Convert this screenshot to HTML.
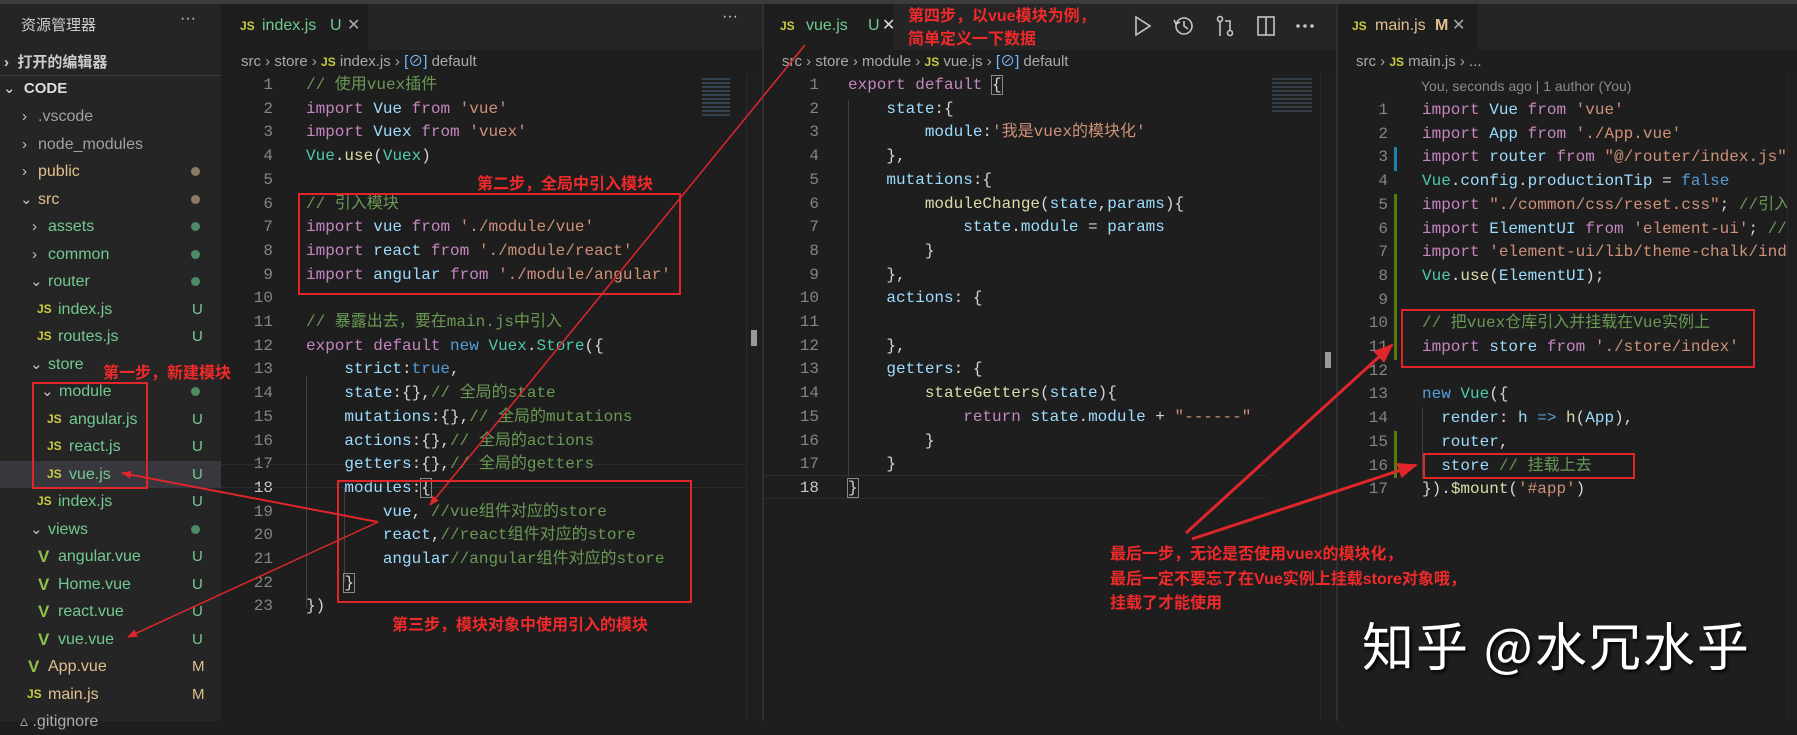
<!DOCTYPE html>
<html><head><meta charset="utf-8">
<style>
*{margin:0;padding:0;box-sizing:border-box}
body{width:1797px;height:721px;overflow:hidden;background:#1e1e1e;position:relative;font-family:"Liberation Sans","Noto Sans CJK SC",sans-serif;color:#ccc}
.abs{position:absolute}
.top{position:absolute;left:0;top:0;width:1797px;height:4px;background:#3c3c3c}
#side{position:absolute;left:0;top:4px;width:221px;height:717px;background:#252526}
.row{position:absolute;left:0;width:221px;height:27px;font-size:16px;line-height:27px;white-space:nowrap}
.chev{position:absolute;color:#c5c5c5;font-size:15px}
.js{color:#cbcb41;font-weight:bold;font-size:12px;position:absolute;font-family:"Liberation Sans",sans-serif}
.vu{color:#8dc149;font-weight:bold;font-size:17px;position:absolute}
.g{color:#73c991}.y{color:#e2c08d}.w{color:#ccc}
.dot{position:absolute;left:191px;top:9px;width:9px;height:9px;border-radius:50%}
.bd{position:absolute;left:192px;font-size:15px}
.tabbar{position:absolute;top:4px;height:46px;background:#252526}
.tab{position:absolute;top:4px;height:46px;background:#1e1e1e;font-size:16px;line-height:44px;white-space:nowrap}
.bc{position:absolute;top:50px;height:24px;font-size:15px;color:#a9a9a9;line-height:24px;white-space:nowrap}
.code{position:absolute;font-family:"Liberation Mono","Noto Sans CJK SC",monospace;font-size:16px;line-height:23.7px;white-space:pre;color:#d4d4d4}
.ln{position:absolute;font-family:"Liberation Mono",monospace;font-size:16px;line-height:23.7px;white-space:pre;color:#858585;text-align:right;width:60px}
.k{color:#c586c0}.v{color:#9cdcfe}.c{color:#4ec9b0}.s{color:#ce9178}.m{color:#6a9955}.f{color:#dcdcaa}.b{color:#569cd6}
.red{position:absolute;border:2px solid #e0262b}
.ann{position:absolute;color:#f02a2a;font-weight:bold;font-size:16px;white-space:nowrap;font-family:"Liberation Sans","Noto Sans CJK SC",sans-serif}
</style></head><body>
<div class="top"></div>
<div id="side">
 <div class="abs" style="left:21px;top:10px;font-size:15px;color:#ccc">资源管理器</div>
 <div class="abs" style="left:180px;top:6px;font-size:16px;color:#ccc">···</div>
 <div class="abs" style="left:4px;top:47px;font-size:15px;color:#ccc;font-weight:bold">›&nbsp; 打开的编辑器</div>
 <div class="abs" style="left:0;top:71px;width:221px;height:1px;background:#3a3a3a"></div>
 <div class="abs" style="left:3px;top:75px;font-size:15px;color:#ddd;font-weight:bold"><span style="font-weight:normal">⌄</span>&nbsp; CODE</div>
</div>
<div id="tree" style="position:absolute;left:0;top:0">
 <div class="row" style="top:103px"><span class="chev" style="left:22px">›</span><span class="abs" style="left:38px;color:#a0a0a0">.vscode</span></div>
 <div class="row" style="top:131px"><span class="chev" style="left:22px">›</span><span class="abs" style="left:38px;color:#a0a0a0">node_modules</span></div>
 <div class="row" style="top:158px"><span class="chev" style="left:22px">›</span><span class="abs y" style="left:38px">public</span><span class="dot" style="background:#8a7c64"></span></div>
 <div class="row" style="top:186px"><span class="chev" style="left:20px">⌄</span><span class="abs y" style="left:38px">src</span><span class="dot" style="background:#8a7c64"></span></div>
 <div class="row" style="top:213px"><span class="chev" style="left:32px">›</span><span class="abs g" style="left:48px">assets</span><span class="dot" style="background:#4d8a66"></span></div>
 <div class="row" style="top:241px"><span class="chev" style="left:32px">›</span><span class="abs g" style="left:48px">common</span><span class="dot" style="background:#4d8a66"></span></div>
 <div class="row" style="top:268px"><span class="chev" style="left:30px">⌄</span><span class="abs g" style="left:48px">router</span><span class="dot" style="background:#4d8a66"></span></div>
 <div class="row" style="top:296px"><span class="js" style="left:37px">JS</span><span class="abs g" style="left:58px">index.js</span><span class="bd g">U</span></div>
 <div class="row" style="top:323px"><span class="js" style="left:37px">JS</span><span class="abs g" style="left:58px">routes.js</span><span class="bd g">U</span></div>
 <div class="row" style="top:351px"><span class="chev" style="left:30px">⌄</span><span class="abs g" style="left:48px">store</span></div>
 <div class="row" style="top:378px"><span class="chev" style="left:41px">⌄</span><span class="abs g" style="left:59px">module</span><span class="dot" style="background:#4d8a66"></span></div>
 <div class="row" style="top:406px"><span class="js" style="left:47px">JS</span><span class="abs g" style="left:69px">angular.js</span><span class="bd g">U</span></div>
 <div class="row" style="top:433px"><span class="js" style="left:47px">JS</span><span class="abs g" style="left:69px">react.js</span><span class="bd g">U</span></div>
 <div class="row" style="top:461px;background:#37373d"><span class="js" style="left:47px">JS</span><span class="abs g" style="left:69px">vue.js</span><span class="bd g">U</span></div>
 <div class="row" style="top:488px"><span class="js" style="left:37px">JS</span><span class="abs g" style="left:58px">index.js</span><span class="bd g">U</span></div>
 <div class="row" style="top:516px"><span class="chev" style="left:30px">⌄</span><span class="abs g" style="left:48px">views</span><span class="dot" style="background:#4d8a66"></span></div>
 <div class="row" style="top:543px"><span class="vu" style="left:38px">V</span><span class="abs g" style="left:58px">angular.vue</span><span class="bd g">U</span></div>
 <div class="row" style="top:571px"><span class="vu" style="left:38px">V</span><span class="abs g" style="left:58px">Home.vue</span><span class="bd g">U</span></div>
 <div class="row" style="top:598px"><span class="vu" style="left:38px">V</span><span class="abs g" style="left:58px">react.vue</span><span class="bd g">U</span></div>
 <div class="row" style="top:626px"><span class="vu" style="left:38px">V</span><span class="abs g" style="left:58px">vue.vue</span><span class="bd g">U</span></div>
 <div class="row" style="top:653px"><span class="vu" style="left:28px">V</span><span class="abs y" style="left:48px">App.vue</span><span class="bd y">M</span></div>
 <div class="row" style="top:681px"><span class="js" style="left:27px">JS</span><span class="abs y" style="left:48px">main.js</span><span class="bd y">M</span></div>
 <div class="row" style="top:708px"><span class="abs" style="left:20px;color:#aaa">▵ .gitignore</span></div>
</div>

<!-- Editor 1 -->
<div class="tabbar" style="left:221px;width:541px"></div>
<div class="tab" style="left:221px;width:147px"><span class="js" style="left:19px;top:0">JS</span><span class="abs g" style="left:41px">index.js</span><span class="abs g" style="left:109px">U</span><span class="abs" style="left:126px;color:#aaa">✕</span></div>
<div class="abs" style="left:722px;top:8px;font-size:16px;color:#ccc">···</div>
<div class="bc" style="left:241px">src › store › <span style="color:#cbcb41;font-weight:bold;font-size:12px">JS</span> index.js › <span style="color:#75beff">[⊘]</span> default</div>
<div class="ln" style="left:213px;top:74px">1
2
3
4
5
6
7
8
9
10
11
12
13
14
15
16
17
<span style="color:#c6c6c6">18</span>
19
20
21
22
23</div>
<div class="abs" style="left:221px;top:464px;width:526px;height:24px;border-top:1px solid #2c2c2c;border-bottom:1px solid #2c2c2c"></div>
<div class="abs" style="left:306px;top:376px;width:1px;height:232px;background:#404040"></div>
<div class="abs" style="left:344px;top:488px;width:1px;height:94px;background:#404040"></div>
<div class="code" style="left:306px;top:74px"><span class="m">// 使用vuex插件</span>
<span class="k">import</span> <span class="v">Vue</span> <span class="k">from</span> <span class="s">'vue'</span>
<span class="k">import</span> <span class="v">Vuex</span> <span class="k">from</span> <span class="s">'vuex'</span>
<span class="c">Vue</span>.<span class="f">use</span>(<span class="c">Vuex</span>)

<span class="m">// 引入模块</span>
<span class="k">import</span> <span class="v">vue</span> <span class="k">from</span> <span class="s">'./module/vue'</span>
<span class="k">import</span> <span class="v">react</span> <span class="k">from</span> <span class="s">'./module/react'</span>
<span class="k">import</span> <span class="v">angular</span> <span class="k">from</span> <span class="s">'./module/angular'</span>

<span class="m">// 暴露出去，要在main.js中引入</span>
<span class="k">export</span> <span class="k">default</span> <span class="b">new</span> <span class="c">Vuex</span>.<span class="c">Store</span>({
    <span class="v">strict</span>:<span class="b">true</span>,
    <span class="v">state</span>:{},<span class="m">// 全局的state</span>
    <span class="v">mutations</span>:{},<span class="m">// 全局的mutations</span>
    <span class="v">actions</span>:{},<span class="m">// 全局的actions</span>
    <span class="v">getters</span>:{},<span class="m">// 全局的getters</span>
    <span class="v">modules</span>:<span style="outline:1px solid #888">{</span>
        <span class="v">vue</span>, <span class="m">//vue组件对应的store</span>
        <span class="v">react</span>,<span class="m">//react组件对应的store</span>
        <span class="v">angular</span><span class="m">//angular组件对应的store</span>
    <span style="outline:1px solid #888">}</span>
})</div>
<div class="abs" style="left:702px;top:78px;width:28px;height:40px;background:repeating-linear-gradient(#3a4a5a 0 2px,#1e1e1e 2px 4px);opacity:.8"></div>
<div class="abs" style="left:746px;top:74px;width:16px;height:647px;background:#1f1f1f;border-left:1px solid #2a2a2a"></div>
<div class="abs" style="left:751px;top:330px;width:6px;height:16px;background:#999"></div>

<!-- Editor 2 -->
<div class="abs" style="left:762px;top:4px;width:2px;height:717px;background:#2f2f2f"></div>
<div class="tabbar" style="left:764px;width:572px"></div>
<div class="tab" style="left:764px;width:130px"><span class="js" style="left:16px;top:0">JS</span><span class="abs g" style="left:42px">vue.js</span><span class="abs g" style="left:104px">U</span><span class="abs" style="left:118px;color:#ddd">✕</span></div>
<svg class="abs" style="left:1130px;top:12px" width="200" height="28" viewBox="0 0 200 28" fill="none" stroke="#c5c5c5" stroke-width="1.6">
 <path d="M6 5 L20 14 L6 23 Z"/>
 <circle cx="54" cy="14" r="8"/><path d="M54 9 V14 L58 17"/><path d="M44 8 L46 12 L50 10"/>
 <circle cx="90" cy="7" r="2.5"/><circle cx="100" cy="21" r="2.5"/><path d="M90 10 V24 M100 18 V9 L95 9"/>
 <rect x="128" y="5" width="16" height="18"/><path d="M136 5 V23"/>
 <circle cx="168" cy="14" r="1" fill="#c5c5c5"/><circle cx="175" cy="14" r="1" fill="#c5c5c5"/><circle cx="182" cy="14" r="1" fill="#c5c5c5"/>
</svg>
<div class="bc" style="left:782px">src › store › module › <span style="color:#cbcb41;font-weight:bold;font-size:12px">JS</span> vue.js › <span style="color:#75beff">[⊘]</span> default</div>
<div class="ln" style="left:759px;top:74px">1
2
3
4
5
6
7
8
9
10
11
12
13
14
15
16
17
<span style="color:#c6c6c6">18</span></div>
<div class="abs" style="left:764px;top:475px;width:503px;height:24px;border-top:1px solid #2c2c2c;border-bottom:1px solid #2c2c2c"></div>
<div class="abs" style="left:848px;top:100px;width:1px;height:376px;background:#404040"></div>
<div class="code" style="left:848px;top:74px"><span class="k">export</span> <span class="k">default</span> <span style="outline:1px solid #888">{</span>
    <span class="v">state</span>:{
        <span class="v">module</span>:<span class="s">'我是vuex的模块化'</span>
    },
    <span class="v">mutations</span>:{
        <span class="f">moduleChange</span>(<span class="v">state</span>,<span class="v">params</span>){
            <span class="v">state</span>.<span class="v">module</span> = <span class="v">params</span>
        }
    },
    <span class="v">actions</span>: {

    },
    <span class="v">getters</span>: {
        <span class="f">stateGetters</span>(<span class="v">state</span>){
            <span class="k">return</span> <span class="v">state</span>.<span class="v">module</span> + <span class="s">"------"</span>
        }
    }
<span style="outline:1px solid #888">}</span></div>
<div class="abs" style="left:1272px;top:78px;width:40px;height:36px;background:repeating-linear-gradient(#3a4a5a 0 2px,#1e1e1e 2px 4px);opacity:.7"></div>
<div class="abs" style="left:1320px;top:74px;width:16px;height:647px;background:#1f1f1f;border-left:1px solid #2a2a2a"></div>
<div class="abs" style="left:1325px;top:352px;width:6px;height:16px;background:#999"></div>

<!-- Editor 3 -->
<div class="abs" style="left:1336px;top:4px;width:2px;height:717px;background:#2f2f2f"></div>
<div class="tabbar" style="left:1338px;width:459px"></div>
<div class="tab" style="left:1338px;width:140px"><span class="js" style="left:14px;top:0">JS</span><span class="abs y" style="left:37px">main.js</span><span class="abs y" style="left:97px;font-weight:bold">M</span><span class="abs" style="left:114px;color:#aaa">✕</span></div>
<div class="bc" style="left:1356px">src › <span style="color:#cbcb41;font-weight:bold;font-size:12px">JS</span> main.js › ...</div>
<div class="abs" style="left:1421px;top:78px;font-size:14px;color:#8a8a8a;white-space:nowrap">You, seconds ago | 1 author (You)</div>
<div class="ln" style="left:1328px;top:99px">1
2
3
4
5
6
7
8
9
10
11
12
13
14
15
16
17</div>
<div class="abs" style="left:1394px;top:147px;width:3px;height:24px;background:#1b81a8"></div>
<div class="abs" style="left:1394px;top:194px;width:3px;height:166px;background:#587c0c"></div>
<div class="abs" style="left:1394px;top:431px;width:3px;height:47px;background:#587c0c"></div>
<div class="abs" style="left:1422px;top:407px;width:1px;height:72px;background:#404040"></div>
<div class="code" style="left:1422px;top:99px"><span class="k">import</span> <span class="v">Vue</span> <span class="k">from</span> <span class="s">'vue'</span>
<span class="k">import</span> <span class="v">App</span> <span class="k">from</span> <span class="s">'./App.vue'</span>
<span class="k">import</span> <span class="v">router</span> <span class="k">from</span> <span class="s">"@/router/index.js"</span>
<span class="c">Vue</span>.<span class="v">config</span>.<span class="v">productionTip</span> = <span class="b">false</span>
<span class="k">import</span> <span class="s">"./common/css/reset.css"</span>; <span class="m">//引入</span>
<span class="k">import</span> <span class="v">ElementUI</span> <span class="k">from</span> <span class="s">'element-ui'</span>; <span class="m">//</span>
<span class="k">import</span> <span class="s">'element-ui/lib/theme-chalk/inde</span>
<span class="c">Vue</span>.<span class="f">use</span>(<span class="v">ElementUI</span>);

<span class="m">// 把vuex仓库引入并挂载在Vue实例上</span>
<span class="k">import</span> <span class="v">store</span> <span class="k">from</span> <span class="s">'./store/index'</span>

<span class="b">new</span> <span class="c">Vue</span>({
  <span class="v">render</span>: <span class="v">h</span> <span class="b">=&gt;</span> <span class="f">h</span>(<span class="v">App</span>),
  <span class="v">router</span>,
  <span class="v">store</span> <span class="m">// 挂载上去</span>
}).<span class="f">$mount</span>(<span class="s">'#app'</span>)</div>
<div class="abs" style="left:1787px;top:74px;width:10px;height:647px;background:#1f1f1f;border-left:1px solid #2a2a2a"></div>

<!-- Red boxes & annotations -->
<div class="red" style="left:298px;top:193px;width:383px;height:102px"></div>
<div class="ann" style="left:477px;top:170px">第二步，全局中引入模块</div>
<div class="red" style="left:337px;top:480px;width:355px;height:123px"></div>
<div class="ann" style="left:392px;top:611px">第三步，模块对象中使用引入的模块</div>
<div class="red" style="left:32px;top:382px;width:116px;height:107px"></div>
<div class="ann" style="left:103px;top:359px">第一步，新建模块</div>
<div class="ann" style="left:908px;top:5px;line-height:23px">第四步，以vue模块为例，<br>简单定义一下数据</div>
<div class="ann" style="left:1110px;top:543px;line-height:24.5px">最后一步，无论是否使用vuex的模块化，<br>最后一定不要忘了在Vue实例上挂载store对象哦，<br>挂载了才能使用</div>
<div class="red" style="left:1401px;top:309px;width:354px;height:59px"></div>
<div class="red" style="left:1423px;top:453px;width:212px;height:26px"></div>
<div class="abs" style="left:1362px;top:612px;font-size:52px;color:#fff;font-family:'Noto Sans CJK SC',sans-serif;white-space:nowrap;line-height:64px;text-shadow:2px 2px 3px #000;letter-spacing:2px">知乎 @水冗水乎</div>

<svg class="abs" style="left:0;top:0" width="1797" height="721">
 <defs><marker id="ah" markerWidth="10" markerHeight="8" refX="9" refY="4" orient="auto" markerUnits="userSpaceOnUse"><path d="M0 0 L10 4 L0 8 Z" fill="#e0262b"/></marker>
 <marker id="ah2" markerWidth="20" markerHeight="16" refX="18" refY="8" orient="auto" markerUnits="userSpaceOnUse"><path d="M0 0 L20 8 L0 16 Z" fill="#e0262b"/></marker></defs>
 <g stroke="#e0262b" fill="none">
  <line x1="805" y1="45" x2="430" y2="505" stroke-width="1.5" marker-end="url(#ah)"/>
  <line x1="378" y1="522" x2="122" y2="473" stroke-width="2" marker-end="url(#ah)"/>
  <line x1="378" y1="522" x2="128" y2="637" stroke-width="1.5" marker-end="url(#ah)"/>
  <line x1="1186" y1="533" x2="1392" y2="345" stroke-width="3" marker-end="url(#ah2)"/>
  <line x1="1192" y1="539" x2="1416" y2="465" stroke-width="3" marker-end="url(#ah2)"/>
 </g>
</svg>
</body></html>
